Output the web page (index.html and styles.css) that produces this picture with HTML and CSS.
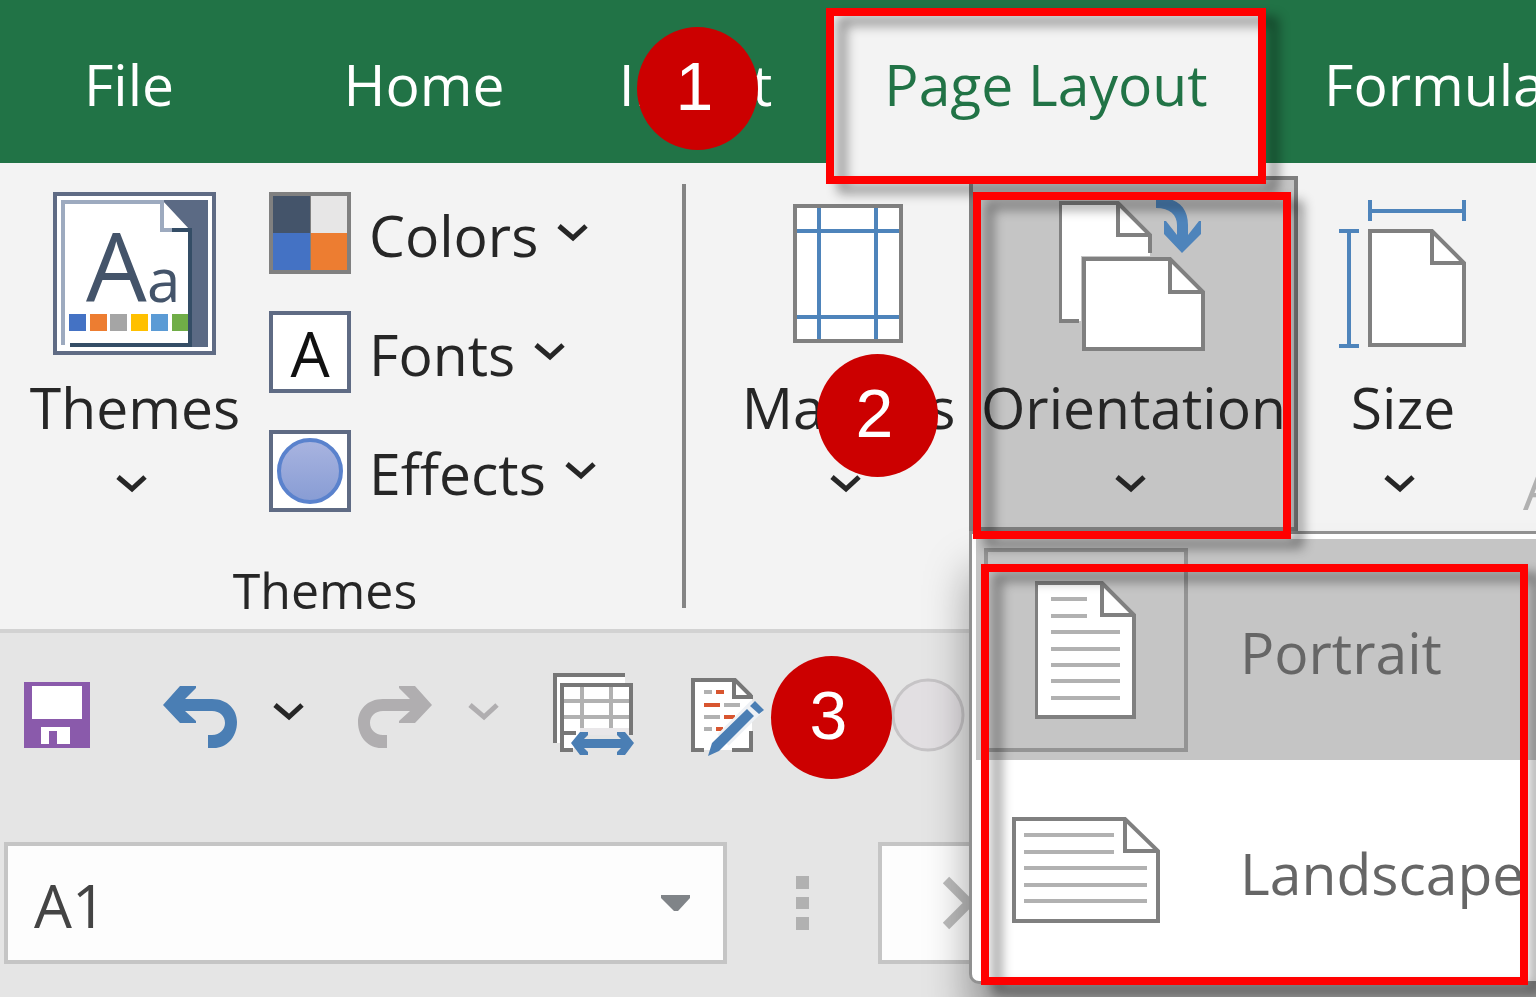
FILE: index.html
```html
<!DOCTYPE html>
<html lang="en">
<head>
<meta charset="utf-8">
<title>Page Layout ribbon</title>
<link rel="stylesheet" href="styles.css">
</head>
<body>
<svg width="0" height="0" class="defs" aria-hidden="true">
  <symbol id="chevron" viewBox="0 0 32 22"><path d="M3 4 17 16 30 4" fill="none" stroke="currentColor" stroke-width="5"/></symbol>
  <symbol id="undo" viewBox="163 673 74 84"><path d="M163 705 180 686H196V688L185 699H212C228 699 237 710 237 722 237 738 226 748 214 748H208V735H212C220 735 225 729 225 723 225 716 220 711 212 711H185L196 721V723H180Z" fill="currentColor"/></symbol>
</svg>
<div class="app">
  <nav class="tabs">
    <button class="tab tab-file">File</button>
    <button class="tab tab-home">Home</button>
    <button class="tab tab-insert">Insert</button>
    <button class="tab tab-layout active">Page Layout</button>
    <button class="tab tab-formulas">Formulas</button>
  </nav>

  <section class="ribbon">
    <div class="group themes">
      <div class="tools">
        <button class="big big-themes">
          <svg class="big-icon" width="164" height="163" viewBox="53 192 164 163">
            <path d="M55 194H214V353H55Z" fill="#fff" stroke="#5f6b84" stroke-width="4"/>
            <path d="M162 200H208V347H190V230Z" fill="#5b6a84"/>
            <path d="M63 345V202H162V230H190" fill="none" stroke="#9daabf" stroke-width="4"/>
            <path d="M164 206V228H186Z" fill="#fff"/>
            <path d="M172 230H190V345H70" fill="none" stroke="#344d66" stroke-width="4"/>
            <text x="86" y="302" class="aa-large">A</text>
            <text x="147" y="302" class="aa-small">a</text>
            <path d="M69 314h17v17h-17z" fill="#4472c4"/>
            <path d="M90 314h17v17h-17z" fill="#ed7d31"/>
            <path d="M110 314h17v17h-17z" fill="#a5a5a5"/>
            <path d="M131 314h17v17h-17z" fill="#ffc000"/>
            <path d="M151 314h17v17h-17z" fill="#5b9bd5"/>
            <path d="M172 314h16v17h-16z" fill="#70ad47"/>
          </svg>
          <span class="big-label">Themes</span>
          <svg class="chevron"><use href="#chevron"/></svg>
        </button>
        <div class="stack">
          <button class="small">
            <svg width="82" height="82" viewBox="0 0 82 82">
              <path d="M2 2H80V80H2Z" fill="#808080" stroke="#808080" stroke-width="4"/>
              <path d="M4 4h37v37H4z" fill="#44546a"/><path d="M42 4h36v37H42z" fill="#e7e6e6"/>
              <path d="M4 41h37v37H4z" fill="#4472c4"/><path d="M42 41h36v37H42z" fill="#ed7d31"/>
            </svg>
            <span class="small-label">Colors</span>
            <svg class="chevron"><use href="#chevron"/></svg>
          </button>
          <button class="small">
            <svg width="82" height="82" viewBox="0 0 82 82">
              <path d="M2 2H80V80H2Z" fill="#fff" stroke="#5f6b84" stroke-width="4"/>
              <text x="41" y="66" text-anchor="middle" class="font-a">A</text>
            </svg>
            <span class="small-label">Fonts</span>
            <svg class="chevron"><use href="#chevron"/></svg>
          </button>
          <button class="small">
            <svg width="82" height="82" viewBox="0 0 82 82">
              <defs><linearGradient id="fx" x2="0" y2="1"><stop stop-color="#a9b4e0"/><stop offset="1" stop-color="#879cd4"/></linearGradient></defs>
              <path d="M2 2H80V80H2Z" fill="#fff" stroke="#5f6b84" stroke-width="4"/>
              <circle cx="41" cy="41" r="31" fill="url(#fx)" stroke="#5a82cd" stroke-width="4"/>
            </svg>
            <span class="small-label">Effects</span>
            <svg class="chevron"><use href="#chevron"/></svg>
          </button>
        </div>
      </div>
      <div class="group-label">Themes</div>
    </div>
    <div class="separator"></div>
    <div class="group setup">
      <button class="big big-margins">
        <svg class="big-icon" width="112" height="163" viewBox="793 192 112 163">
          <path d="M795 206H901V341H795Z" fill="#fff" stroke="#808080" stroke-width="4"/>
          <path d="M819 208V339M876 208V339M797 231H899M797 317H899" stroke="#4e84bb" stroke-width="4"/>
        </svg>
        <span class="big-label">Margins</span>
        <svg class="chevron"><use href="#chevron"/></svg>
      </button>
      <div class="dropdown">
        <button class="big big-orientation" aria-expanded="true">
          <svg class="big-icon" width="150" height="163" viewBox="1059 192 150 163">
            <path d="M1060 203H1118L1150 235V256H1081V321H1060Z" fill="#fff"/>
            <path d="M1079 321H1060V203H1118L1150 235V253M1118 203V235H1150" fill="none" stroke="#808080" stroke-width="4"/>
            <path d="M1084 259H1170L1203 292V349H1084Z" fill="#fff" stroke="#808080" stroke-width="4"/>
            <path d="M1170 259V292H1203" fill="none" stroke="#808080" stroke-width="4"/>
            <path d="M1156 199H1168C1181 201 1188 211 1188 225V235L1199 221H1201V234L1182 253 1164 234V221H1166L1177 235V225C1177 215 1170 208 1156 208Z" fill="#4e84bb"/>
          </svg>
          <span class="big-label">Orientation</span>
          <svg class="chevron"><use href="#chevron"/></svg>
        </button>
        <div class="menu" role="menu">
          <button class="item selected" role="menuitem">
            <span class="thumb">
              <svg width="102" height="138" viewBox="1034 580 102 138">
                <path d="M1035 582H1101L1133 614V716H1035Z" fill="#fff" stroke="#808080" stroke-width="4"/>
                <path d="M1101 582V614H1133" fill="none" stroke="#808080" stroke-width="4"/>
                <path d="M1050 598H1086M1050 615H1086M1050 631H1119M1050 648H1119M1050 664H1119M1050 680H1119M1050 697H1119" stroke="#b1b1b1" stroke-width="4"/>
              </svg>
            </span>
            <span class="item-label">Portrait</span>
          </button>
          <button class="item" role="menuitem">
            <span class="thumb">
              <svg width="148" height="107" viewBox="1013 817 148 107">
                <path d="M1015 819H1126L1159 851V921H1015Z" fill="#fff" stroke="#808080" stroke-width="4"/>
                <path d="M1126 819V851H1159" fill="none" stroke="#808080" stroke-width="4"/>
                <path d="M1025 835H1115M1025 852H1115M1025 868H1148M1025 885H1148M1025 901H1148" stroke="#b1b1b1" stroke-width="4"/>
              </svg>
            </span>
            <span class="item-label">Landscape</span>
          </button>
        </div>
      </div>
      <button class="big big-size">
        <svg class="big-icon" width="128" height="163" viewBox="1340 192 128 163">
          <path d="M1371 211H1465M1371 200V221M1465 200V221M1350 231V346M1340 231H1360M1340 346H1360" stroke="#4e84bb" stroke-width="4"/>
          <path d="M1371 231H1433L1465 263V345H1371Z" fill="#fff" stroke="#808080" stroke-width="4"/>
          <path d="M1433 231V263H1465" fill="none" stroke="#808080" stroke-width="4"/>
        </svg>
        <span class="big-label">Size</span>
        <svg class="chevron"><use href="#chevron"/></svg>
      </button>
      <button class="big big-area" disabled><span class="big-label">Area</span></button>
    </div>
  </section>

  <section class="quick">
    <button class="save" aria-label="Save">
      <svg width="66" height="84" viewBox="24 673 66 84">
        <path d="M24 682H90V748H24Z" fill="#8a5aab"/>
        <path d="M32 686H82V719H32ZM41 727H70V744H57V731H49V744H41Z" fill="#fff"/>
      </svg>
    </button>
    <div class="split">
      <button class="undo" aria-label="Undo"><svg width="74" height="84"><use href="#undo"/></svg></button>
      <button aria-label="Undo list"><svg class="chevron"><use href="#chevron"/></svg></button>
    </div>
    <div class="split off">
      <button class="redo" aria-label="Redo"><svg width="74" height="84"><use href="#undo"/></svg></button>
      <button aria-label="Redo list"><svg class="chevron"><use href="#chevron"/></svg></button>
    </div>
    <button aria-label="Column width">
      <svg width="84" height="84" viewBox="553 673 84 84">
        <path d="M553 743V675H625V685H562V743Z" fill="#fff"/>
        <path d="M555 743V675H625" fill="none" stroke="#777" stroke-width="4"/>
        <path d="M562 685H631V735H580L573 750H562Z" fill="#fff"/>
        <path d="M582 687V733M611 687V733M564 701H629M564 717H629" stroke="#b1b1b1" stroke-width="4"/>
        <path d="M580 728H629V735H580Z" fill="#e9e7e9"/>
        <path d="M573 750H562V685H631V735M564 733H576" fill="none" stroke="#777" stroke-width="4"/>
        <path d="M571 743 580 732H588V735L584 739H621L617 735V732H625L634 743 625 755H617V752L621 748H584L588 752V755H580Z" fill="#4a7eb4"/>
      </svg>
    </button>
    <button aria-label="Edit document">
      <svg width="76" height="84" viewBox="690 673 76 84">
        <path d="M692 680H734L751 697V750H692Z" fill="#fff"/>
        <path d="M703 750H692V680H734L750 696M733 680V697H752M750 731V750H731" fill="none" stroke="#777" stroke-width="4"/>
        <path d="M703 692H711M723 705H739M703 717H719M703 729H711" stroke="#b1b1b1" stroke-width="4"/>
        <path d="M715 692H723M703 705H719M723 717H734M715 729H722" stroke="#d8552f" stroke-width="4"/>
        <path d="M722 740 756 706" stroke="#eef1f5" stroke-width="16"/>
        <path d="M707 756 711 743 746 709 753 716 718 751ZM749 706 754 701 763 710 758 714Z" fill="#4a7eb4"/>
      </svg>
    </button>
    <button class="record" aria-label="Record">
      <svg width="74" height="84" viewBox="890 673 74 84"><circle cx="927" cy="715" r="35" fill="#e2dfe2" stroke="#c6c4c6" stroke-width="3"/></svg>
    </button>
  </section>

  <section class="formula">
    <div class="namebox">
      <input class="cell-name" aria-label="Name box" value="A1">
      <button aria-label="Names"><svg width="30" height="18" viewBox="0 0 30 18"><path d="M0 1H29V4L17 17H13L0 4Z" fill="#808488"/></svg></button>
    </div>
    <svg class="grip" width="13" height="54" viewBox="0 0 13 54"><path d="M0 0h13v13H0zM0 21h13v12H0zM0 41h13v13H0z" fill="#b1b1b1"/></svg>
    <div class="entry">
      <button aria-label="Cancel"><svg width="56" height="56" viewBox="0 0 56 56"><path d="M6 5 52 51M52 5 6 51" stroke="#bdbdbd" stroke-width="9"/></svg></button>
    </div>
  </section>

  <div class="frame frame-tab"></div>
  <div class="frame frame-button"></div>
  <div class="frame frame-menu"></div>
  <div class="badge badge-1">1</div>
  <div class="badge badge-2">2</div>
  <div class="badge badge-3">3</div>
</div>
</body>
</html>
```
FILE: styles.css
```css
* { box-sizing: border-box; }
body {
  margin: 0;
  font: 57px/64px "Open Sans", "Noto Sans", sans-serif;
  color: #262626;
}
button, input {
  margin: 0;
  padding: 0;
  border: 0;
  background: none;
  font: inherit;
  color: inherit;
  white-space: nowrap;
}
svg { display: block; flex: none; }
.defs { position: absolute; }
.app {
  position: relative;
  min-height: 100vh;
  overflow: hidden;
  background: #e5e5e5;
}

/* Tabs */
.tabs {
  display: flex;
  height: 163px;
  padding-top: 8px;
  background: #217346;
}
.tab { flex: none; padding-bottom: 4px; color: #fff; }
.tab-file { width: 258px; margin-right: 25px; }
.tab-home { width: 282px; }
.tab-insert { width: 261px; }
.tab-layout { width: 440px; }
.tab-formulas { padding-left: 58px; }
.tab.active { background: #f3f3f3; color: #217346; }

/* Ribbon */
.ribbon {
  display: flex;
  padding: 13px 0 9px;
  background: #f3f3f3;
  border-bottom: 4px solid #d2d2d2;
}
.group { flex: none; }
.themes { width: 682px; }
.setup { display: flex; align-items: flex-start; padding-left: 42px; }
.tools { display: flex; height: 355px; }
.separator { flex: none; width: 4px; margin: 8px 0 12px; background: #848484; }
.group-label {
  margin-top: 29px;
  padding-right: 32px;
  font-size: 50px;
  line-height: 60px;
  text-align: center;
}
.big {
  display: flex;
  flex-direction: column;
  align-items: center;
  height: 355px;
  padding-top: 16px;
}
.big-label { margin: 20px 0 34px; }
.big .chevron { margin-right: 8px; }
.big-themes { width: 210px; margin-left: 30px; }
.big-margins { width: 241px; }
.big-orientation {
  width: 329px;
  padding-top: 12px;
  border: 4px solid #7f7f7f;
  background: #c5c5c5;
}
.big-size { width: 210px; }
.big-area { padding: 260px 0 0 15px; color: #b1b1b1; }
.chevron { width: 32px; height: 22px; }
.stack { display: flex; flex-direction: column; gap: 37px; margin-left: 29px; padding-top: 16px; }
.small { display: flex; align-items: center; gap: 18px; height: 82px; }
.small-label, .item-label { padding-top: 4px; }
.aa-large { font-size: 96px; fill: #44546a; }
.aa-small { font-size: 60px; fill: #44546a; }
.font-a { font-size: 62px; fill: #111; }

/* Orientation menu */
.dropdown { position: relative; }
.menu {
  position: absolute;
  z-index: 1;
  top: 100%;
  left: 0;
  width: 640px;
  padding: 5px 4px 0;
  border: 3px solid #919191;
  border-radius: 0 0 10px 10px;
  background: #fff;
  box-shadow: 0 40px 44px rgba(0, 0, 0, .36);
}
.item {
  display: flex;
  align-items: center;
  gap: 52px;
  width: 100%;
  height: 221px;
  padding-left: 8px;
  color: #666;
}
.item.selected { background: #c5c5c5; }
.thumb {
  display: flex;
  align-items: center;
  justify-content: center;
  width: 204px;
  height: 204px;
}
.selected .thumb { border: 4px solid #949494; }

/* Quick access */
.quick { display: flex; gap: 54px; padding: 40px 24px 85px; }
.quick > * { flex: none; }
.save { margin-right: 19px; }
.split { display: flex; align-items: center; gap: 35px; }
.split .chevron { margin-bottom: 6px; }
.undo { color: #4a7eb4; }
.off { color: #b0aeb0; }
.redo { transform: scaleX(-1); }
.record { margin-left: 70px; }

/* Formula bar */
.formula { display: flex; align-items: center; padding-left: 4px; }
.namebox, .entry {
  display: flex;
  align-items: center;
  height: 122px;
  border: 4px solid #c5c5c5;
  background: #fdfdfd;
}
.namebox { width: 723px; padding: 0 32px 0 26px; color: #444; }
.cell-name { flex: 1; min-width: 0; padding-top: 4px; font-size: 60px; }
.grip { margin: 0 69px; }
.entry { flex: 1; padding-left: 58px; }

/* Callouts */
.frame {
  position: absolute;
  z-index: 2;
  border: 8px solid #f00;
  filter: drop-shadow(12px 9px 6px rgba(0, 0, 0, .45));
}
.frame-tab { left: 826px; top: 8px; width: 440px; height: 176px; }
.frame-button { left: 973px; top: 192px; width: 318px; height: 347px; }
.frame-menu { left: 981px; top: 564px; width: 547px; height: 421px; }
.badge {
  position: absolute;
  z-index: 3;
  display: flex;
  align-items: center;
  justify-content: center;
  width: 121px;
  height: 123px;
  padding: 0 6px 6px 0;
  border-radius: 50%;
  background: #c00;
  color: #fff;
  font: 68px/76px "Liberation Sans", Arial, sans-serif;
}
.badge-1 { left: 637px; top: 27px; }
.badge-2 { left: 817px; top: 354px; }
.badge-3 { left: 771px; top: 656px; }
```
